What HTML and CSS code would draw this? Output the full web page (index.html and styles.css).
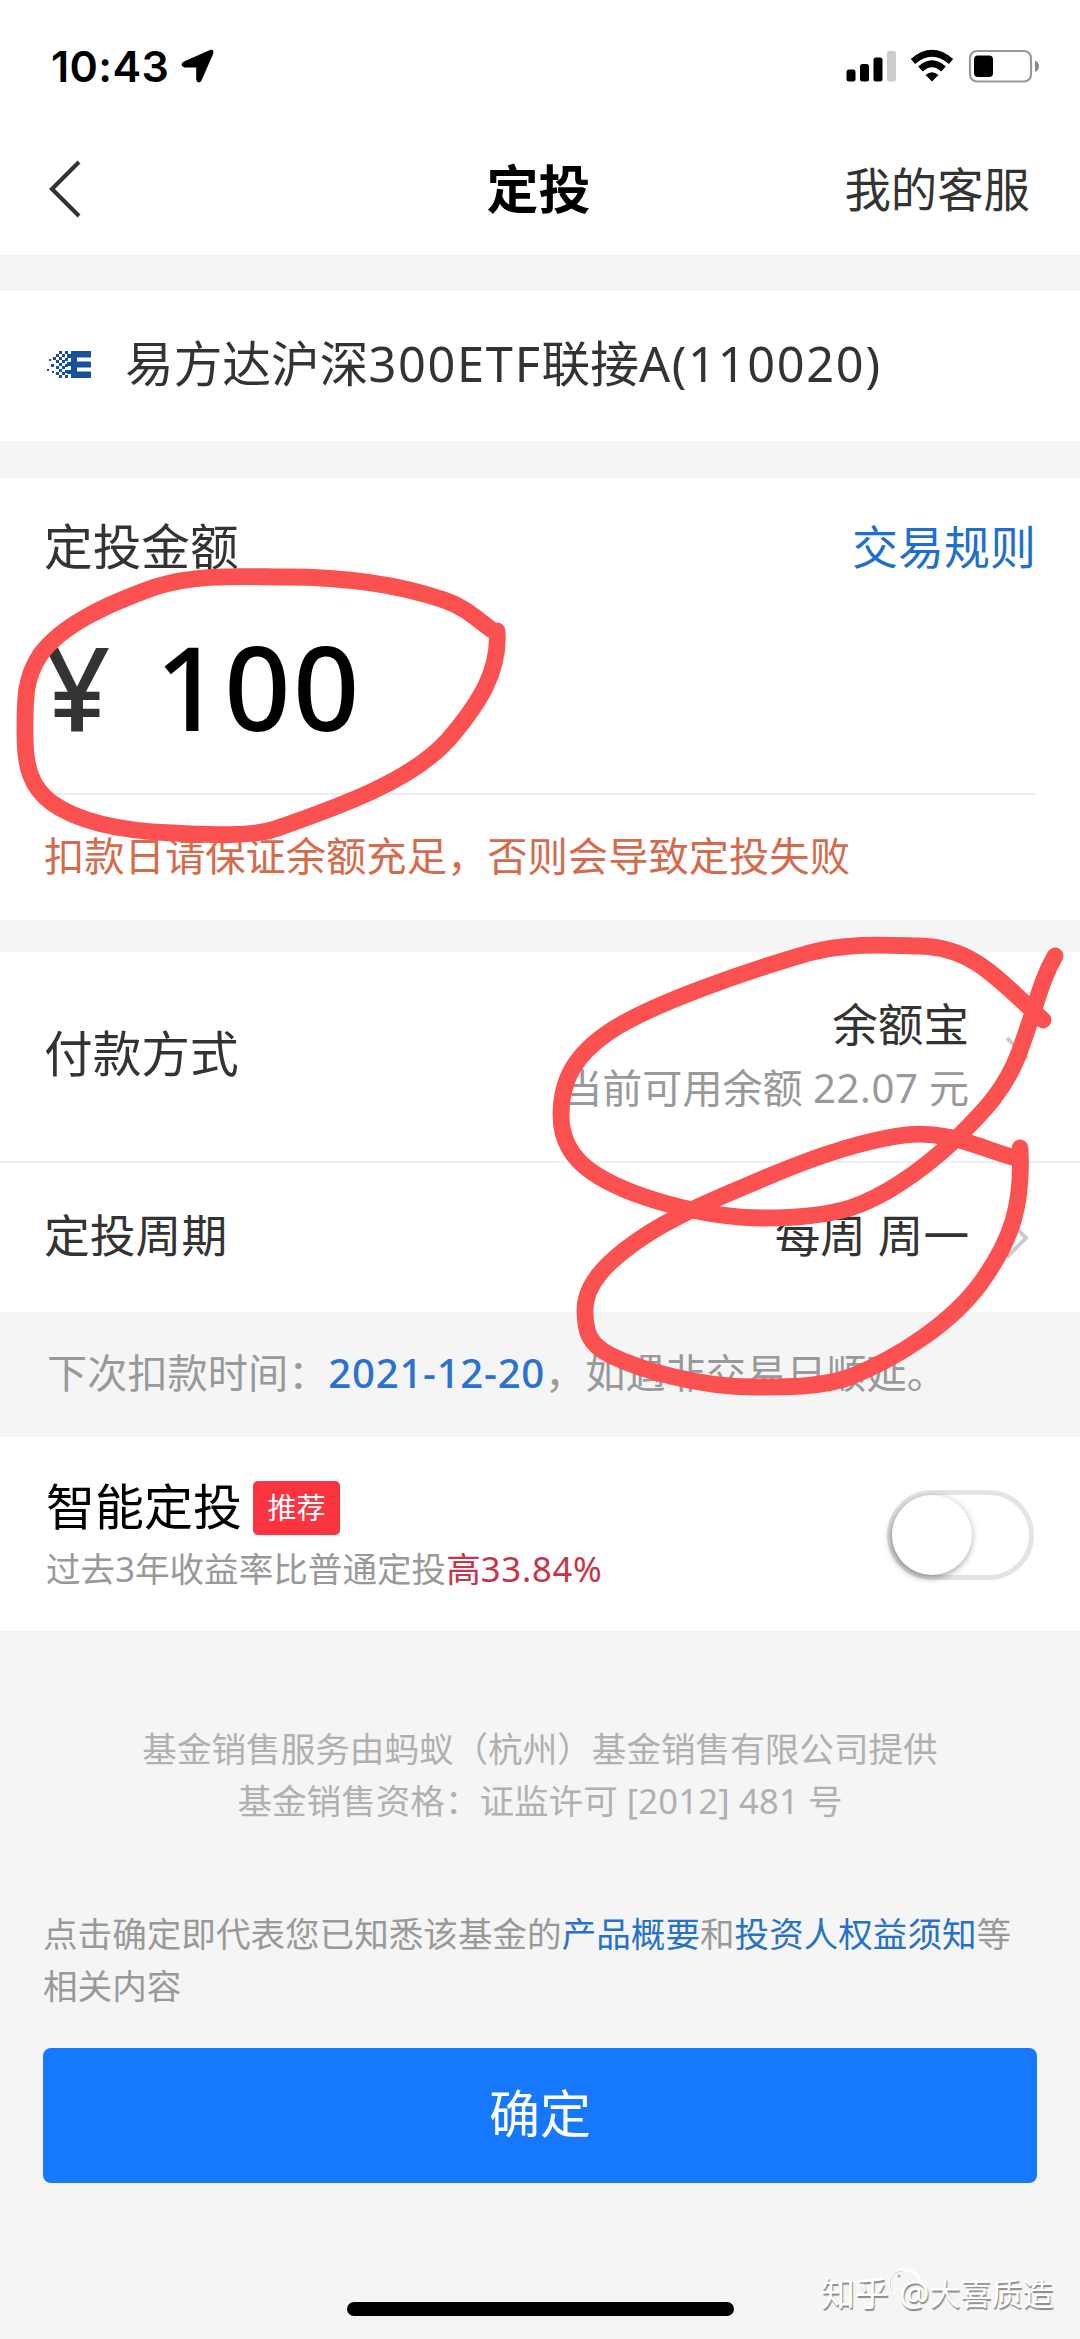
FILE: index.html
```html
<!DOCTYPE html>
<html lang="zh-CN">
<head>
<meta charset="utf-8">
<title>定投</title>
<link rel="stylesheet" href="styles.css">
</head>
<body>
<div class="screen">
  <header class="top">
    <div class="status">
      <span class="time">10:43</span>
      <svg class="locate" width="34" height="34" viewBox="0 0 34 34"><path d="M30.500 2.200 4.500 13.500Q1 15.400 4.500 17.200H16.200Q17.400 17.200 17.400 18.500V30.500Q18.500 34 20.500 30.800L32 4.500Q33 1 30.500 2.200Z" fill="#000" stroke="#000" stroke-width="2.400" stroke-linejoin="round"/></svg>
      <svg class="indicators" width="196" height="36" viewBox="0 0 196 36">
        <rect x="2.500" y="21.500" width="9" height="12" rx="2.500"/>
        <rect x="16" y="16" width="9" height="17.500" rx="2.500"/>
        <rect x="29.500" y="9.500" width="9" height="24" rx="2.500"/>
        <rect x="43" y="3" width="9" height="30.500" rx="2.500" fill="#ccc"/>
        <g fill="none" stroke="#000" stroke-width="6.500">
          <path d="M69 13.500Q88 -3 107 13.500"/>
          <path d="M76.500 21Q88 10.500 99.500 21"/>
        </g>
        <path d="M81.500 27Q88 21.500 94.500 27L88 33.500Z"/>
        <rect x="126" y="3" width="61" height="30.500" rx="7" fill="#fff" stroke="#999" stroke-width="2.200"/>
        <rect x="130" y="7.500" width="19" height="21.500" rx="4"/>
        <path d="M191 12.500Q195 14 195 18T191 24Z" fill="#888"/>
      </svg>
    </div>
    <nav class="nav">
      <svg class="back" width="36" height="58" viewBox="0 0 36 58"><path d="M32 2 5 29 32 56" fill="none" stroke="#333" stroke-width="4.200"/></svg>
      <h1 class="title">定投</h1>
      <span class="service">我的客服</span>
    </nav>
  </header>

  <section class="card fund">
    <svg class="logo" width="46" height="30" viewBox="0 0 46 30" fill="#16519a">
      <path d="M24 1H44V7.500H30V11.500H44V17.500H30V21.500H44V28H24V24H20V20H24V16H20V12H24V8H20V4H24Z"/>
      <path d="M12 1h3v3h-3zM18 1h3v3h-3zM9 4h3v3h-3zM15 4h3v3h-3zM21 5h3v3h-3zM6 7h3v3h-3zM12 7h3v3h-3zM18 8h3v3h-3zM9 10h3v3h-3zM15 10h3v3h-3zM2 9h2v2h-2zM4 14h3v3h-3zM12 13h3v3h-3zM18 14h3v3h-3zM0 19h2v2h-2zM9 16h3v3h-3zM15 16h3v3h-3zM5 21h2v2h-2zM12 19h3v3h-3zM18 20h3v3h-3zM9 22h3v3h-3zM15 22h3v3h-3zM12 25h3v3h-3zM18 25h3v3h-3z"/>
    </svg>
    <span class="fund-name">易方达沪深<span class="latin">300ETF</span>联接<span class="latin">A(110020)</span></span>
  </section>

  <section class="card amount">
    <div class="amount-head"><span class="label">定投金额</span><a class="rules">交易规则</a></div>
    <div class="amount-value"><span class="yen">¥</span><span class="number">100</span></div>
    <p class="warning">扣款日请保证余额充足，否则会导致定投失败</p>
  </section>

  <section class="card options">
    <div class="row row-pay">
      <span class="label">付款方式</span>
      <div class="choice"><span class="value">余额宝</span><span class="balance">当前可用余额 <span class="sum">22.07</span> 元</span></div>
      <svg class="chevron" width="24" height="44" viewBox="0 0 24 44"><path d="M2 3 21 22 2 41"/></svg>
    </div>
    <div class="row row-cycle">
      <span class="label cycle">定投周期</span>
      <div class="choice"><span class="value">每周 周一</span></div>
      <svg class="chevron" width="24" height="44" viewBox="0 0 24 44"><path d="M2 3 21 22 2 41"/></svg>
    </div>
  </section>

  <p class="next">下次扣款时间：<span class="date">2021-12-20</span>，如遇非交易日顺延。</p>

  <section class="card smart">
    <div class="smart-text">
      <div class="smart-head"><span class="smart-title">智能定投</span><span class="badge">推荐</span></div>
      <p class="smart-sub">过去3年收益率比普通定投<span class="gain">高<span class="pct">33.84%</span></span></p>
    </div>
    <div class="toggle"><div class="knob"></div></div>
  </section>

  <footer class="footer">
    <p class="provider">基金销售服务由蚂蚁（杭州）基金销售有限公司提供<br>基金销售资格：证监许可 <span class="lic">[2012] 481</span> 号</p>
    <p class="agree">点击确定即代表您已知悉该基金的<a>产品概要</a>和<a>投资人权益须知</a>等相关内容</p>
    <button class="confirm">确定</button>
    <div class="home"></div>
  </footer>

  <div class="watermark">
    <span>知乎</span>
    <svg class="bubble" width="34" height="30" viewBox="0 0 34 30"><path d="M5 25C-3 14 3 2 15 2S31 9 30 15" fill="none" stroke="#fff" stroke-width="3"/><path d="M4 24C-2 14 3 3 14 3" fill="none" stroke="#ccc"/><circle cx="10" cy="8" r="1.500" fill="#aaa"/></svg>
    <span class="at">@</span><span class="author">大喜质造</span>
  </div>

  <svg class="marks" width="1080" height="2339" viewBox="0 0 1080 2339">
    <path d="M497 631C500 670 480 703 448 740C412 780 344 805 275 829C245 838 200 834 172 833C125 831 80 823 52 803C30 787 25 765 25 735C25 700 24 680 40 655C62 625 105 605 155 587C200 573 245 577 286 577C345 577 400 585 444 600C465 607 478 620 492 630"/>
    <path d="M1055 956C1040 982 1036 1007 1019 1053C1005 1090 985 1110 957 1138C930 1163 890 1195 850 1208C820 1217 790 1218 764 1218C700 1218 625 1195 592 1172C570 1157 561 1138 561 1115C561 1080 575 1055 609 1032C650 1004 750 970 809 953C845 943 880 945 919 946C975 947 1000 982 1043 1020"/>
    <path d="M1020 1148C1023 1205 1012 1240 980 1284C952 1322 900 1357 850 1377C820 1388 780 1387 753 1387C700 1387 640 1370 610 1355C588 1344 585 1330 585 1310C585 1285 605 1263 640 1239C678 1213 725 1195 767 1177C812 1158 865 1140 905 1135C945 1130 975 1146 1012 1157"/>
  </svg>
</div>
</body>
</html>
```
FILE: styles.css
```css
* { box-sizing: border-box; }
body, h1, p { margin: 0; }
body {
  background: #f5f5f5;
  font-family: "Noto Sans", "Noto Sans CJK SC", sans-serif;
  color: #333;
}
.screen {
  position: relative;
  width: 1080px;
  height: 2339px;
  overflow: hidden;
  display: flex;
  flex-direction: column;
  white-space: nowrap;
}
.card { background: #fff; }

.top { height: 255px; background: #fff; }
.status {
  height: 132px;
  padding: 0 40px 0 51px;
  display: flex;
  align-items: center;
}
.time {
  font: 600 43px/50px Inter, sans-serif;
  letter-spacing: .4px;
  color: #000;
}
.locate { margin-left: 11px; }
.indicators { margin-left: auto; }
.nav {
  height: 114px;
  padding: 0 50px 0 47px;
  display: grid;
  grid-template-columns: 1fr auto 1fr;
  align-items: center;
}
.title { font-size: 52px; line-height: 60px; font-weight: 700; color: #000; }
.service { justify-self: end; font-size: 46.400px; line-height: 60px; }

.fund {
  margin-top: 36px;
  height: 150px;
  padding: 0 47px 4px;
  display: flex;
  align-items: center;
  gap: 32px;
}
.logo { margin-top: 2px; }
.fund-name { font-size: 48.700px; line-height: 60px; margin-top: -2px; }
.latin { letter-spacing: 1.700px; }

.amount {
  margin-top: 37px;
  height: 442px;
  padding: 38px 44px 0;
}
.amount-head {
  display: flex;
  justify-content: space-between;
  align-items: center;
  height: 60px;
}
.label { font-size: 48.700px; line-height: 60px; }
.rules { font-size: 46px; line-height: 60px; padding-bottom: 1px; color: #1f6fd0; }
.amount-value {
  height: 219px;
  padding: 34px 0 0;
  border-bottom: 2px solid #eee;
  display: flex;
  gap: 45px;
  font-size: 116px;
  line-height: 152px;
  font-weight: 500;
}
.number { color: #000; letter-spacing: 2.500px; }
.warning { margin-top: 31px; font-size: 40.300px; line-height: 60px; color: #d66a4c; }

.options { margin-top: 32px; height: 360px; }
.row {
  padding: 0 51px 0 44px;
  display: flex;
  align-items: center;
}
.row-pay { height: 211px; border-bottom: 2px solid #f0f0f0; }
.row-pay .label { padding-bottom: 7px; }
.row-pay .choice { padding-bottom: 2px; }
.row-cycle { height: 149px; }
.row-cycle .label, .row-cycle .choice { padding-bottom: 6px; }
.row .cycle { font-size: 45.800px; }
.choice {
  margin-left: auto;
  display: flex;
  flex-direction: column;
  align-items: flex-end;
}
.value { font-size: 45.600px; line-height: 64px; }
.balance { font-size: 40.100px; line-height: 64px; color: #999; }
.sum { letter-spacing: .6px; }
.chevron { margin-left: 36px; }
.chevron path { fill: none; stroke: #c7ccd1; stroke-width: 4; }

.next {
  height: 125px;
  padding-left: 47px;
  font-size: 40.200px;
  line-height: 122px;
  color: #999;
}
.date { color: #2a72cf; font-weight: 500; letter-spacing: .7px; }

.smart {
  height: 194px;
  padding: 2px 46px 0;
  display: flex;
  justify-content: space-between;
  align-items: center;
}
.smart-head { display: flex; align-items: center; gap: 11px; height: 68px; }
.smart-title { font-size: 49px; line-height: 60px; color: #000; }
.badge {
  width: 87px;
  height: 54px;
  margin-top: 4px;
  border-radius: 5px;
  background: #fb3440;
  color: #fff;
  font-size: 29px;
  line-height: 53px;
  text-align: center;
}
.smart-sub { font-size: 34.600px; line-height: 58px; color: #999; }
.gain { color: #c8344a; }
.pct { letter-spacing: .8px; }
.toggle {
  width: 147px;
  height: 90px;
  border: 5px solid #e4e4e4;
  border-radius: 45px;
  background: #fff;
}
.knob {
  width: 80px;
  height: 80px;
  border-radius: 50%;
  background: #fff;
  box-shadow: -2px 3px 7px rgba(0, 0, 0, .35), 3px 0 6px rgba(0, 0, 0, .08);
}

.footer { flex: 1; padding: 92px 43px 0; }
.provider { text-align: center; font-size: 34.600px; line-height: 52px; color: #b0b0b0; }
.lic { letter-spacing: .2px; }
.agree {
  margin-top: 81px;
  padding-right: 10px;
  font-size: 34.600px;
  line-height: 52px;
  color: #999;
  white-space: normal;
}
.agree a { color: #2572c8; }
.confirm {
  display: block;
  width: 994px;
  height: 135px;
  margin-top: 36px;
  padding: 0 0 6px;
  border: 0;
  border-radius: 8px;
  background: #1677ff;
  color: #fff;
  font: 400 51px/60px "Noto Sans", "Noto Sans CJK SC", sans-serif;
}
.home {
  width: 387px;
  height: 14px;
  margin: 119px 0 0 304px;
  border-radius: 7px;
  background: #000;
}

.watermark {
  position: absolute;
  left: 821px;
  top: 2268px;
  display: flex;
  align-items: center;
  font-size: 34px;
  line-height: 50px;
  color: #fff;
  text-shadow: 1px 2px 1px #888;
}
.bubble { margin: -20px -24px 0 0; }
.author { font-size: 31px; }
.marks {
  position: absolute;
  left: 0;
  top: 0;
  fill: none;
  stroke: #fc5151;
  stroke-width: 16.800px;
  stroke-linecap: round;
  stroke-linejoin: round;
}
```
